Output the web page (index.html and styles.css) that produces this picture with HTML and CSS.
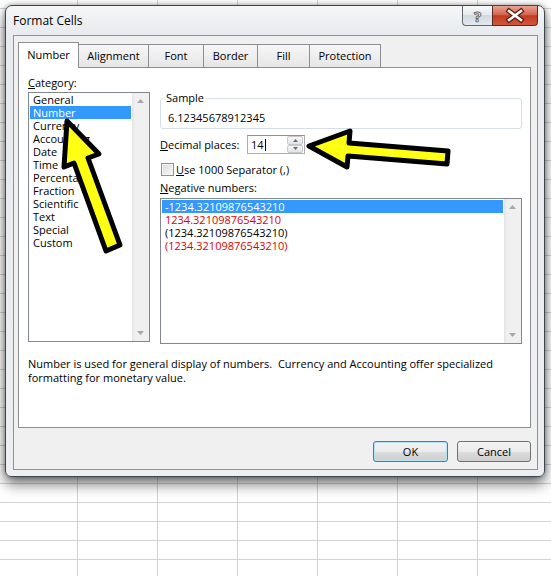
FILE: index.html
```html
<!DOCTYPE html>
<html lang="en">
<head>
    <meta charset="UTF-8">
    <meta name="viewport" content="width=device-width, initial-scale=1.0">
    <title>Format Cells</title>
    <link rel="stylesheet" href="styles.css">
</head>
<body>
    <div class="dialog">
        <div class="titlebar">
            <span class="title">Format Cells</span>
            <div class="caption">
                <span class="cap-btn help">?</span>
                <span class="cap-btn close">
                    <svg width="44" height="19" viewBox="0 0 44 19">
                        <path d="M16 5 L28 14 M28 5 L16 14" stroke="#5e1a0c" stroke-width="5" stroke-linecap="square"/>
                        <path d="M16 5 L28 14 M28 5 L16 14" stroke="#fff" stroke-width="2.6" stroke-linecap="square"/>
                    </svg>
                </span>
            </div>
        </div>

        <div class="client">
            <!-- tab strip -->
            <div class="tabs">
                <span class="tab active">Number</span>
                <span class="tab">Alignment</span>
                <span class="tab">Font</span>
                <span class="tab">Border</span>
                <span class="tab">Fill</span>
                <span class="tab">Protection</span>
            </div>

            <div class="tab-page">
                <div class="columns">
                    <div class="col-left">
                        <div class="field-label"><u>C</u>ategory:</div>
                        <div class="listbox category">
                            <ul class="items">
                                <li>General</li>
                                <li class="selected">Number</li>
                                <li>Currency</li>
                                <li>Accounting</li>
                                <li>Date</li>
                                <li>Time</li>
                                <li>Percentage</li>
                                <li>Fraction</li>
                                <li>Scientific</li>
                                <li>Text</li>
                                <li>Special</li>
                                <li>Custom</li>
                            </ul>
                            <div class="scrollbar">
                                <svg width="7" height="4" viewBox="0 0 7 4"><path d="M0 4 L3.5 0 L7 4 Z" fill="#a7a7a7"/></svg>
                                <svg width="7" height="4" viewBox="0 0 7 4"><path d="M0 0 L3.5 4 L7 0 Z" fill="#a7a7a7"/></svg>
                            </div>
                        </div>
                    </div>

                    <div class="col-right">
                        <fieldset class="sample">
                            <legend>Sample</legend>
                            <div class="sample-value">6.12345678912345</div>
                        </fieldset>

                        <div class="decimals">
                            <span class="decimals-label"><u>D</u>ecimal places:</span>
                            <div class="spin-input">
                                <span>14</span><span class="caret"></span>
                                <div class="spin">
                                    <span class="spin-btn"><svg width="5" height="3" viewBox="0 0 5 3"><path d="M0 3 L2.5 0 L5 3 Z" fill="#5a6a80"/></svg></span>
                                    <span class="spin-btn"><svg width="5" height="3" viewBox="0 0 5 3"><path d="M0 0 L2.5 3 L5 0 Z" fill="#5a6a80"/></svg></span>
                                </div>
                            </div>
                        </div>

                        <div class="checkbox-row">
                            <span class="checkbox"></span>
                            <span><u>U</u>se 1000 Separator (,)</span>
                        </div>

                        <div class="field-label neg-label"><u>N</u>egative numbers:</div>
                        <div class="listbox negative">
                            <ul class="items">
                                <li class="selected">-1234.32109876543210</li>
                                <li class="red">1234.32109876543210</li>
                                <li>(1234.32109876543210)</li>
                                <li class="red">(1234.32109876543210)</li>
                            </ul>
                            <div class="scrollbar">
                                <svg width="7" height="4" viewBox="0 0 7 4"><path d="M0 4 L3.5 0 L7 4 Z" fill="#a7a7a7"/></svg>
                                <svg width="7" height="4" viewBox="0 0 7 4"><path d="M0 0 L3.5 4 L7 0 Z" fill="#a7a7a7"/></svg>
                            </div>
                        </div>
                    </div>
                </div>

                <p class="description">Number is used for general display of numbers.&nbsp; Currency and Accounting offer specialized<br>formatting for monetary value.</p>
            </div>

            <div class="buttons">
                <button class="btn default">OK</button>
                <button class="btn">Cancel</button>
            </div>
        </div>
    </div>

    <!-- yellow callout arrows drawn over the dialog -->
    <svg class="callouts" width="551" height="576" viewBox="0 0 551 576">
        <polygon points="67,121 99,154 88,158 120,245 106,251 74,163 64,167" />
        <polygon points="309,146 350,131 349,143 448,151 447,164 348,156 347,167" />
    </svg>
</body>
</html>
```

FILE: styles.css
```css
body {
    margin: 0;
    height: 576px;
    overflow: hidden;
    position: relative;
    font-family: "Segoe UI", "Open Sans", sans-serif;
    font-size: 11px;
    color: #000;
    background-color: #fff;
    background-image:
        linear-gradient(to right, #d2d2d2 1px, transparent 1px),
        linear-gradient(to bottom, #d2d2d2 1px, transparent 1px);
    background-size: 80px 19px;
    background-position: 77px 8px;
}

/* window frame */
.dialog {
    width: 540px;
    height: 472px;
    box-sizing: border-box;
    margin: 5px 0 0 5px;
    padding: 0 6px 6px 7px;
    border: 1px solid #3b4650;
    border-radius: 7px 7px 6px 6px;
    background: linear-gradient(#f4f6f8, #e7eaee 30px, #eceef1);
    box-shadow: 0 7px 14px rgba(0, 0, 0, 0.55), 0 0 5px rgba(0, 0, 0, 0.35);
    display: flex;
    flex-direction: column;
}
.titlebar {
    height: 29px;
    flex: none;
    display: flex;
    align-items: center;
    justify-content: space-between;
}
.title {
    font-size: 12px;
}
.caption {
    align-self: flex-start;
    display: flex;
    height: 20px;
}
.cap-btn {
    box-sizing: border-box;
    height: 20px;
    border: 1px solid #5f6870;
    border-top: none;
    display: flex;
    align-items: center;
    justify-content: center;
}
.help {
    width: 30px;
    border-right: none;
    border-radius: 0 0 0 4px;
    background: linear-gradient(#f7f9fb, #e2e7ec 50%, #d2d9e0 50%, #e4e9ee);
    font-size: 15px;
    font-weight: bold;
    color: #f6f6f6;
    -webkit-text-stroke: 1px #6c6c6c;
    line-height: 18px;
}
.close {
    width: 46px;
    border-color: #5a2a20;
    border-radius: 0 0 4px 0;
    background: linear-gradient(#e9a594, #d4654f 45%, #c13b20 52%, #d2583d);
}

/* client area */
.client {
    flex: none;
    height: 435px;
    box-sizing: border-box;
    border: 1px solid #8d9297;
    background: #f0f0f0;
    padding: 6px 6px 6px 4px;
}
.tabs {
    display: flex;
    align-items: flex-end;
    height: 25px;
    position: relative;
    z-index: 1;
}
.tab {
    box-sizing: border-box;
    height: 23px;
    line-height: 21px;
    text-align: center;
    border: 1px solid #8c8e94;
    border-bottom: none;
    margin-left: -1px;
    background: linear-gradient(#f6f6f6, #e6e6e6);
}
.tab:nth-child(1) { width: 61px; }
.tab:nth-child(2) { width: 71px; }
.tab:nth-child(3) { width: 56px; }
.tab:nth-child(4) { width: 55px; }
.tab:nth-child(5) { width: 53px; }
.tab:nth-child(6) { width: 72px; }
.tab.active {
    height: 26px;
    line-height: 24px;
    margin-left: 0;
    margin-bottom: -1px;
    background: #fff;
}
.tab-page {
    height: 361px;
    box-sizing: border-box;
    border: 1px solid #8c8e94;
    background: #fff;
    padding: 8px 8px 0 9px;
}
.columns {
    display: flex;
    gap: 10px;
}
.col-left {
    width: 122px;
}
.col-right {
    width: 362px;
}
.field-label {
    line-height: 14px;
}

/* list boxes */
.listbox {
    margin-top: 3px;
    box-sizing: border-box;
    border: 1px solid #828790;
    background: #fff;
    display: flex;
}
.category {
    height: 250px;
    margin-top: 2px;
}
.category .items {
    padding-top: 0;
}
.negative {
    height: 146px;
}
.items {
    flex: 1;
    list-style: none;
    margin: 0;
    padding: 1px;
    min-width: 0;
}
.items li {
    height: 13px;
    line-height: 13px;
    padding-left: 3px;
    white-space: nowrap;
    overflow: hidden;
}
.items li.selected {
    background: #3399ff;
    color: #fff;
}
.items li.red {
    color: #e00000;
}
.scrollbar {
    width: 17px;
    flex: none;
    background: linear-gradient(to right, #e4e4e4, #f0f0f0 3px);
    display: flex;
    flex-direction: column;
    justify-content: space-between;
    align-items: center;
    padding: 6px 0;
    box-sizing: border-box;
}

/* right column controls */
.sample {
    margin: 15px 0 0;
    padding: 6px 7px 3px;
    border: 1px solid #d5dfe5;
    border-radius: 3px;
    min-width: 0;
}
.sample legend {
    padding: 0 2px;
    margin-left: -4px;
    line-height: 14px;
}
.sample-value {
    line-height: 14px;
}
.decimals {
    display: flex;
    align-items: center;
    height: 19px;
    margin-top: 6px;
}
.decimals-label {
    width: 87px;
}
.spin-input {
    width: 58px;
    height: 19px;
    box-sizing: border-box;
    border: 1px solid #abadb3;
    border-top-color: #8e9095;
    background: #fff;
    display: flex;
    align-items: center;
    padding-left: 3px;
}
.caret {
    width: 1px;
    height: 12px;
    margin-left: 1px;
    background: #000;
}
.spin {
    margin-left: auto;
    margin-right: 1px;
    width: 16px;
    height: 17px;
    display: flex;
    flex-direction: column;
}
.spin-btn {
    flex: 1;
    box-sizing: border-box;
    border: 1px solid #c6c8cc;
    border-radius: 2px;
    background: linear-gradient(#f8f8f8, #e2e3e6);
    display: flex;
    align-items: center;
    justify-content: center;
}
.checkbox-row {
    display: flex;
    align-items: center;
    height: 14px;
    margin-top: 8px;
}
.checkbox {
    width: 13px;
    height: 13px;
    box-sizing: border-box;
    border: 1px solid #8f8f8f;
    margin: 0 2px 0 1px;
    background: linear-gradient(135deg, #d9dadc, #f9f9f9);
    box-shadow: inset 0 0 0 1px #f4f4f4;
}
.neg-label {
    margin-top: 5px;
}
.description {
    margin: 13px 0 0;
    line-height: 14px;
}

/* dialog buttons */
.buttons {
    display: flex;
    justify-content: flex-end;
    gap: 9px;
    margin-top: 13px;
}
.btn {
    width: 74px;
    height: 21px;
    box-sizing: border-box;
    padding: 0;
    font: inherit;
    color: #000;
    border: 1px solid #707070;
    border-radius: 3px;
    background: linear-gradient(#f2f2f2, #ebebeb 50%, #dddddd 50%, #cfcfcf);
}
.btn.default {
    width: 75px;
    border-color: #3c7fb1;
    box-shadow: inset 0 0 0 1px #b9e1f4;
}

/* annotation arrows */
.callouts {
    position: absolute;
    left: 0;
    top: 0;
    pointer-events: none;
}
.callouts polygon {
    fill: #ffff14;
    stroke: #000;
    stroke-width: 5;
    stroke-linejoin: round;
}
```
